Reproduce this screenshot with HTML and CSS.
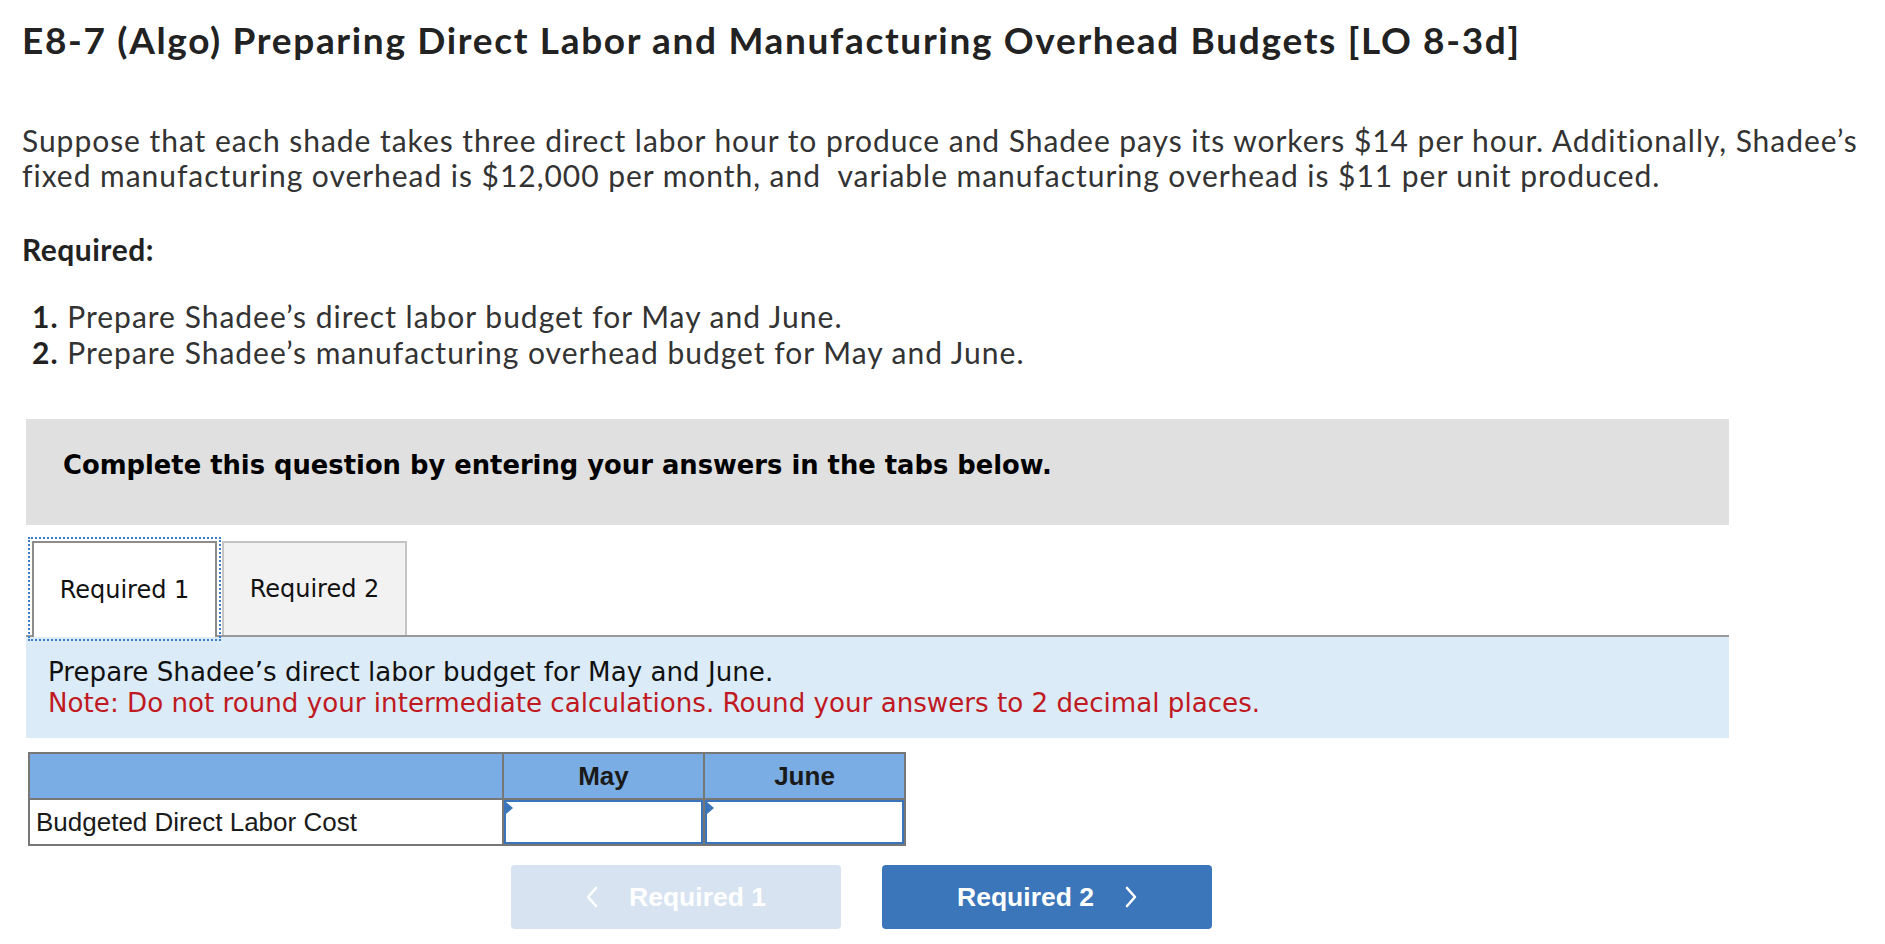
FILE: index.html
```html
<!DOCTYPE html>
<html lang="en">
<head>
<meta charset="utf-8">
<title>E8-7 (Algo) Preparing Direct Labor and Manufacturing Overhead Budgets</title>
<link rel="stylesheet" href="styles.css">
</head>
<body>
<div class="page">
  <h1 class="title">E8-7 (Algo) Preparing Direct Labor and Manufacturing Overhead Budgets [LO 8-3d]</h1>

  <p class="intro">Suppose that each shade takes three direct labor hour to produce and Shadee pays its workers $14 per hour. Additionally, Shadee’s<br>fixed manufacturing overhead is $12,000 per month, and&nbsp; variable manufacturing overhead is $11 per unit produced.</p>

  <p class="req-label">Required:</p>
  <ol class="req-list">
    <li><b>1.</b> Prepare Shadee’s direct labor budget for May and June.</li>
    <li><b>2.</b> Prepare Shadee’s manufacturing overhead budget for May and June.</li>
  </ol>

  <div class="notice">Complete this question by entering your answers in the tabs below.</div>

  <div class="tabs">
    <div class="tab tab-active">Required 1</div>
    <div class="tab">Required 2</div>
  </div>

  <div class="panel">
    <p class="panel-line">Prepare Shadee’s direct labor budget for May and June.</p>
    <p class="panel-line note">Note: Do not round your intermediate calculations. Round your answers to 2 decimal places.</p>
  </div>

  <table class="budget">
    <thead>
      <tr>
        <th class="col-label"></th>
        <th class="col-month">May</th>
        <th class="col-month">June</th>
      </tr>
    </thead>
    <tbody>
      <tr>
        <td class="row-label">Budgeted Direct Labor Cost</td>
        <td class="cell-input"><div class="input-box"></div></td>
        <td class="cell-input"><div class="input-box"></div></td>
      </tr>
    </tbody>
  </table>

  <div class="nav">
    <button class="btn btn-prev">
      <svg class="chev" viewBox="0 0 12 22" width="12" height="22"><polyline points="10,2 2,11 10,20" fill="none" stroke="#ffffff" stroke-width="2.6" stroke-linecap="round" stroke-linejoin="round"/></svg>
      <span>Required 1</span>
    </button>
    <button class="btn btn-next">
      <span>Required 2</span>
      <svg class="chev" viewBox="0 0 12 22" width="12" height="22"><polyline points="2,2 10,11 2,20" fill="none" stroke="#ffffff" stroke-width="2.6" stroke-linecap="round" stroke-linejoin="round"/></svg>
    </button>
  </div>
</div>
</body>
</html>
```

FILE: styles.css
```css
body {
  margin: 0;
  background: #ffffff;
  color: #333333;
  font-family: Lato, "Open Sans", sans-serif;
}

.page {
  padding: 20px 0 0 22px;
}

.title {
  margin: 0;
  font-size: 37px;
  line-height: 40px;
  font-weight: 700;
  letter-spacing: 1.67px;
  color: #222222;
}

.intro {
  margin: 63px 0 0;
  font-size: 30px;
  line-height: 35px;
  letter-spacing: 0.96px;
}

.req-label {
  margin: 39px 0 0;
  font-size: 30px;
  line-height: 35px;
  font-weight: 700;
  letter-spacing: 0.5px;
  color: #222222;
}

.req-list {
  list-style: none;
  margin: 31px 0 0;
  padding: 0 0 0 10px;
  font-size: 30px;
  line-height: 36px;
  letter-spacing: 1px;
}

.req-list b {
  color: #222222;
}

.notice {
  box-sizing: border-box;
  width: 1703px;
  height: 106px;
  margin: 49px 0 0 4px;
  padding: 32px 0 0 37px;
  background: #e0e0e0;
  font-family: "DejaVu Sans", Verdana, sans-serif;
  font-weight: 700;
  font-size: 25.8px;
  line-height: 28px;
  color: #000000;
}

.tabs {
  display: flex;
  align-items: flex-end;
  width: 1703px;
  margin: 16px 0 0 4px;
  border-bottom: 2px solid #999999;
}

.tab {
  box-sizing: border-box;
  width: 185px;
  height: 94px;
  margin-left: 5px;
  display: flex;
  align-items: center;
  justify-content: center;
  background: #f2f2f2;
  border: 2px solid #c4c4c4;
  border-bottom: none;
  font-family: "DejaVu Sans", Verdana, sans-serif;
  font-size: 24px;
  color: #111111;
}

.tab-active {
  position: relative;
  z-index: 1;
  height: 96px;
  margin-left: 6px;
  margin-bottom: -2px;
  background: #ffffff;
  border-color: #8c8c8c;
  outline: 2px dotted #3d7cc9;
  outline-offset: 2px;
}

.panel {
  box-sizing: border-box;
  width: 1703px;
  height: 101px;
  margin-left: 4px;
  padding: 20px 0 0 22px;
  background: #dbebf8;
  font-family: "DejaVu Sans", Verdana, sans-serif;
  font-size: 26.15px;
  line-height: 31px;
  color: #111111;
}

.panel-line {
  margin: 0;
}

.note {
  color: #c0191f;
}

.budget {
  margin: 14px 0 0 6px;
  border-collapse: collapse;
  border: 2px solid #777777;
  font-family: "Liberation Sans", Arial, sans-serif;
  font-size: 26px;
  color: #1a1a1a;
}

.budget th {
  height: 44px;
  padding: 0;
  background: #7aade4;
  border: 2px solid #777777;
  font-weight: 700;
  text-align: center;
}

.col-label {
  width: 472px;
}

.col-month {
  width: 199px;
}

.budget td {
  height: 44px;
  border: 2px solid #777777;
  padding: 0;
}

.row-label {
  padding: 0 0 0 6px !important;
}

.cell-input {
  background: #ffffff;
}

.input-box {
  position: relative;
  box-sizing: border-box;
  height: 44px;
  border: 2px solid #3a75bb;
}

.input-box::before {
  content: "";
  position: absolute;
  left: 0;
  top: 0;
  border-top: 6px solid transparent;
  border-bottom: 6px solid transparent;
  border-left: 7px solid #3a75bb;
}

.nav {
  display: flex;
  gap: 41px;
  margin: 19px 0 0 489px;
}

.btn {
  box-sizing: border-box;
  width: 330px;
  height: 64px;
  border: none;
  border-radius: 4px;
  display: flex;
  align-items: center;
  justify-content: center;
  gap: 31px;
  font-family: "Liberation Sans", Arial, sans-serif;
  font-weight: 700;
  font-size: 26.5px;
  color: #ffffff;
}

.btn-prev {
  background: #d7e3f1;
}

.btn-next {
  background: #3a76b9;
}

.chev {
  display: block;
}
```
